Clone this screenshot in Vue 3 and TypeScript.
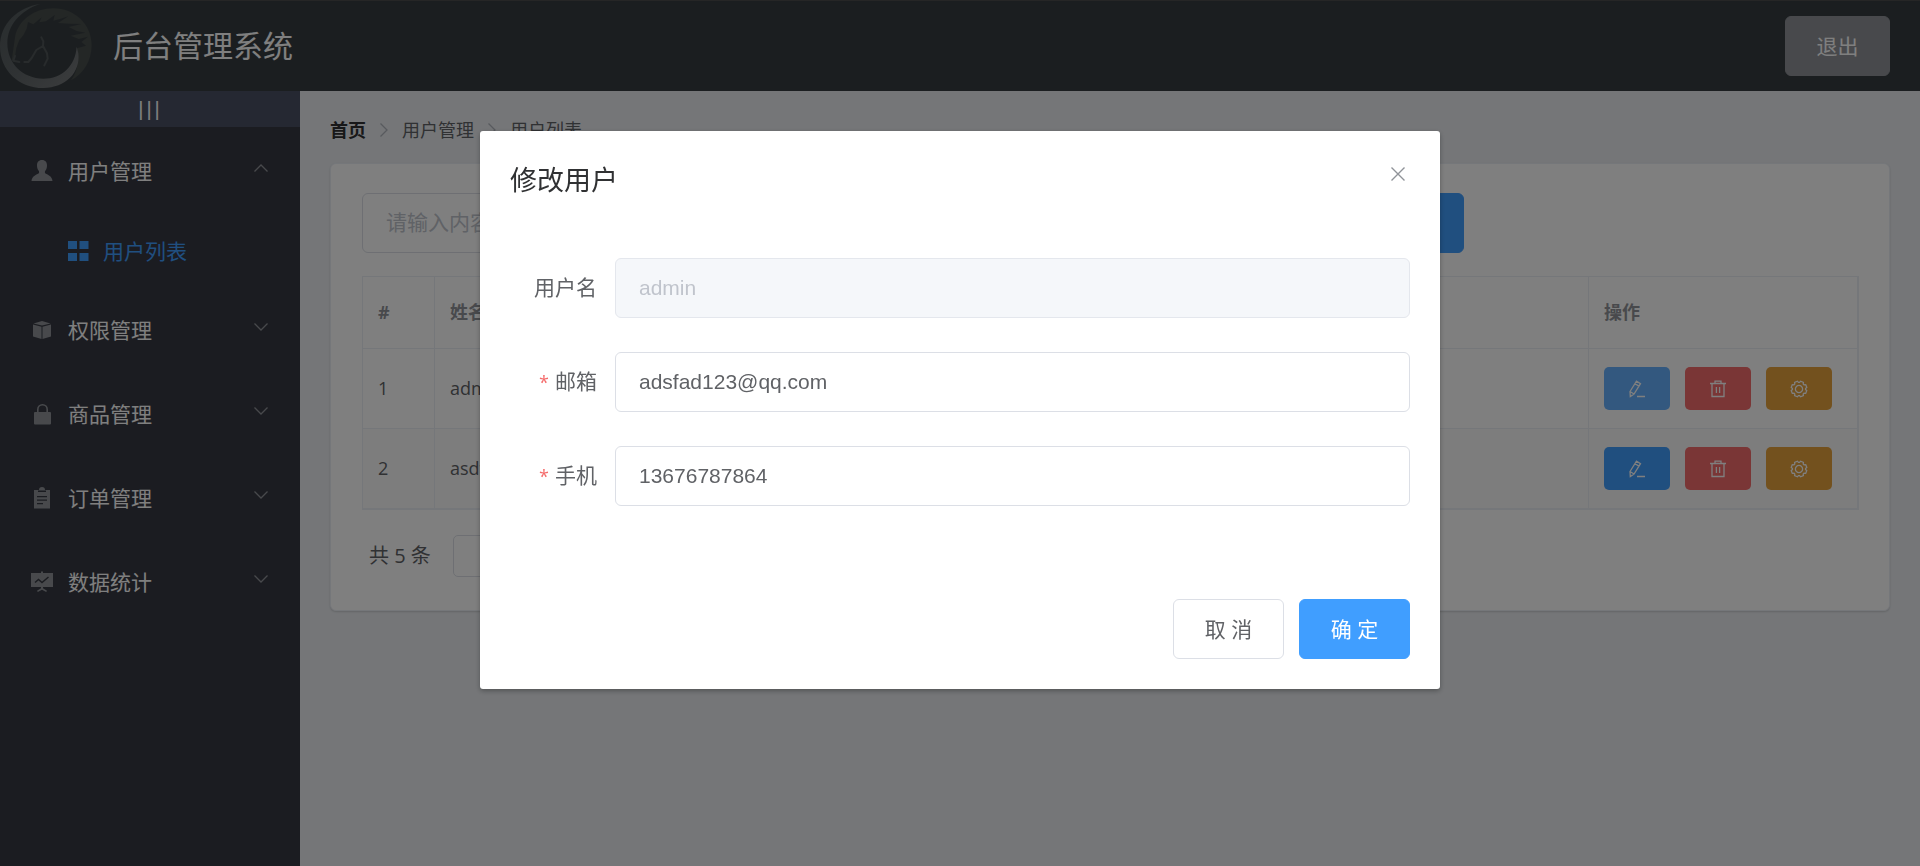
<script setup lang="ts">
import { ref } from 'vue'

interface MenuItem { id: number; label: string; icon: string; open?: boolean }
interface UserRow { id: number; name: string; hovered?: boolean }

const menu: MenuItem[] = [
  { id: 1, label: '用户管理', icon: 'user', open: true },
  { id: 2, label: '权限管理', icon: 'box' },
  { id: 3, label: '商品管理', icon: 'lock' },
  { id: 4, label: '订单管理', icon: 'order' },
  { id: 5, label: '数据统计', icon: 'chart' },
]
const users: UserRow[] = [
  { id: 1, name: 'admin', hovered: true },
  { id: 2, name: 'asdf' },
]
const form = ref({ username: 'admin', email: 'adsfad123@qq.com', mobile: '13676787864' })
const query = ref('')
</script>

<template>
  <div class="page">
    <header class="header">
      <div class="brand">
        <svg class="logo" viewBox="0 3 276 270" aria-hidden="true">
          <defs>
            <linearGradient id="swoosh" x1="0" y1="0" x2="1" y2="1">
              <stop offset="0" stop-color="#525a5c" />
              <stop offset=".5" stop-color="#5e6467" />
              <stop offset="1" stop-color="#787b7d" />
            </linearGradient>
          </defs>
          <path fill="#484e4c" d="M45 112C54 60 104 25 160 25c64 0 115 48 115 110 0 48-26 88-62 106 22-30 24-62 17-96l28-8-14-11 20-16-28 7-24-10 44-9-26-5-24-12 38-9-36-1-34-2 31-20-28 9-17 4 4-17-26 19-20 3 7-15-25 21-16-7-4 20-10 20-12 14-9 24-4 28-6 9 11 5-15-4Z" />
          <path fill="url(#swoosh)" d="M120 12C54 22 0 70 0 140c0 70 56 124 130 124 66 0 112-46 105-104l-5-20c-4 58-44 96-100 96-62 0-108-46-108-106C22 76 60 32 120 12Z" />
          <path fill="none" stroke="#505658" stroke-width="6" stroke-linecap="round" stroke-linejoin="round" d="M124 112l6 12-1 14-20 12-14 24-10 12h-12M129 138l12 22 2 16-10 20M45 168l-5 14 18 4" />
        </svg>
        <span class="brand-name">后台管理系统</span>
      </div>
      <button type="button" class="btn btn-info">退出</button>
    </header>

    <div class="body">
      <aside class="sidebar">
        <button type="button" class="toggle" aria-label="折叠菜单"><span>|</span><span>|</span><span>|</span></button>
        <nav class="menu">
          <template v-for="m in menu" :key="m.id">
            <a href="#" class="menu-item">
              <svg class="menu-icon" viewBox="0 0 22 22" aria-hidden="true">
                <path v-if="m.icon === 'user'" d="M11 0c3.400 0 5 2.300 5 5.500 0 2-.6 4-1.700 5.200-.5.6-.6 2.300.2 2.800 2.500 1.500 6.500 2.500 7 7.500H.5c.5-5 4.500-6 7-7.500.8-.5.7-2.200.2-2.800C6.600 9.500 6 7.500 6 5.500 6 2.300 7.600 0 11 0Z" />
                <g v-else-if="m.icon === 'box'">
                  <path d="M11 2l8.500 2.400L11 6.600 2.500 4.400Z" /><path d="M2 5.500l8.500 2.200V20L2 17.600Z" /><path d="M20 5.500l-8.500 2.200V20l8.500-2.400Z" />
                </g>
                <path v-else-if="m.icon === 'lock'" fill-rule="evenodd" d="M6 9V6.500a5.500 5.500 0 0 1 11 0V9h2a1 1 0 0 1 1 1v10.500a1 1 0 0 1-1 1H4a1 1 0 0 1-1-1V10a1 1 0 0 1 1-1ZM7.600 9h7.800V6.500a3.900 3.900 0 0 0-7.800 0Z" />
                <path v-else-if="m.icon === 'order'" fill-rule="evenodd" d="M3 3h5a3 3 0 0 1 6 0h5v18.500H3ZM7 5h8V3.600H7ZM6 9v1.200h10V9Zm0 3.500v1.200h10v-1.200ZM6 16v1.200h6V16Z" />
                <g v-else>
                  <path d="M0 2h10V.5h2V2h10v14H0Z" />
                  <path class="cutout" d="M4 11.500 7.500 8.500 11 11.500 17.500 6" />
                  <path d="M10 16h2v1.200l4 2.500-.8 1.300-4.200-2.200L6.800 21 6 19.700l4-2.500Z" />
                </g>
              </svg>
              <span>{{ m.label }}</span>
              <svg class="menu-arrow" viewBox="0 0 14 8" aria-hidden="true">
                <path :d="m.open ? 'M.5 7.500 7 1l6.500 6.500' : 'M.5.5 7 7 13.500.5'" />
              </svg>
            </a>
            <a v-if="m.open" href="#" class="submenu-item">
              <svg class="menu-icon" viewBox="0 0 22 22" aria-hidden="true">
                <path d="M1 1h9v8H1ZM12.500 1h9v8h-9ZM1 13h9v8H1ZM12.500 13h9v8h-9Z" />
              </svg>
              <span>用户列表</span>
            </a>
          </template>
        </nav>
      </aside>

      <main class="main">
        <nav class="breadcrumb" aria-label="breadcrumb">
          <a href="#" class="home">首页</a>
          <svg viewBox="0 0 18 18" aria-hidden="true"><path d="M5.500 2.500 12 9l-6.500 6.500" /></svg>
          <span>用户管理</span>
          <svg viewBox="0 0 18 18" aria-hidden="true"><path d="M5.500 2.500 12 9l-6.500 6.500" /></svg>
          <span>用户列表</span>
        </nav>

        <section class="card">
          <div class="tools">
            <input v-model="query" class="input" type="text" placeholder="请输入内容" aria-label="请输入内容" />
            <button type="button" class="btn btn-primary" aria-label="添加用户"></button>
          </div>
          <table class="table">
            <colgroup><col class="col-index" /><col /><col class="col-actions" /></colgroup>
            <thead>
              <tr><th>#</th><th>姓名</th><th>操作</th></tr>
            </thead>
            <tbody>
              <tr v-for="u in users" :key="u.id">
                <td>{{ u.id }}</td>
                <td>{{ u.name }}</td>
                <td>
                  <div class="actions">
                    <button type="button" class="btn-mini edit" :class="{ hovered: u.hovered }" aria-label="编辑">
                      <svg viewBox="0 0 18 18" aria-hidden="true"><path d="M2 11.500 8.500 1.200l4 2.400L6 14l-3.700 2.500ZM7 3.700l4 2.400M2 11.500l4 2.500M9 16.500h8" /></svg>
                    </button>
                    <button type="button" class="btn-mini delete" aria-label="删除">
                      <svg viewBox="0 0 18 18" aria-hidden="true"><path d="M1 3.500h16M6 3V1.200h6V3M3 3.500v13h12v-13M7.400 7v6M10.600 7v6" /></svg>
                    </button>
                    <button type="button" class="btn-mini setting" aria-label="设置">
                      <svg viewBox="-9 -9 18 18" aria-hidden="true">
                        <path d="M7.800 1.600 6.700 4.400 5 4.200 4.200 5 4.400 6.700 1.600 7.800.6 6.600H-.6L-1.600 7.800-4.400 6.700-4.200 5-5 4.200-6.700 4.400-7.800 1.600-6.600.6V-.6L-7.800-1.600-6.700-4.400-5-4.200-4.200-5-4.400-6.700-1.600-7.800-.6-6.600H.6L1.600-7.800 4.400-6.700 4.200-5 5-4.200 6.700-4.400 7.800-1.600 6.600-.6V.6Z" />
                        <circle cx="0" cy="0" r="3.600" />
                      </svg>
                    </button>
                  </div>
                </td>
              </tr>
            </tbody>
          </table>
          <div class="pagination">
            <span>共 5 条</span>
            <select class="page-size" aria-label="每页条数"></select>
          </div>
        </section>
      </main>
    </div>

    <div class="overlay">
      <section class="dialog" role="dialog" aria-modal="true" aria-labelledby="dialog-title">
        <div class="dialog-header">
          <h2 id="dialog-title">修改用户</h2>
          <button type="button" class="close" aria-label="关闭">
            <svg viewBox="0 0 14 14" aria-hidden="true"><path d="M.5.5l13 13M13.500.5l-13 13" /></svg>
          </button>
        </div>
        <form class="form" @submit.prevent>
          <div class="field">
            <label for="username">用户名</label>
            <input id="username" v-model="form.username" class="input" type="text" disabled />
          </div>
          <div class="field required">
            <label for="email">邮箱</label>
            <input id="email" v-model="form.email" class="input" type="text" />
          </div>
          <div class="field required">
            <label for="mobile">手机</label>
            <input id="mobile" v-model="form.mobile" class="input" type="text" />
          </div>
        </form>
        <div class="dialog-footer">
          <button type="button" class="btn">取 消</button>
          <button type="button" class="btn btn-primary">确 定</button>
        </div>
      </section>
    </div>
  </div>
</template>

<style>
body { margin: 0; }
</style>

<style scoped>
.page {
  display: flex;
  flex-direction: column;
  min-height: 100vh;
  font-family: "Open Sans", "Noto Sans CJK SC", sans-serif;
  font-size: 21px;
  line-height: 30px;
  color: #606266;
}
.page *, .page { box-sizing: border-box; }
a { color: inherit; text-decoration: none; }
button, input, select { margin: 0; font: inherit; cursor: pointer; }

.header {
  display: flex;
  align-items: center;
  justify-content: space-between;
  height: 91px;
  padding-right: 30px;
  border-top: 1px solid #4c4c4c;
  background: #373d41;
}
.brand { display: flex; align-items: center; gap: 21px; }
.logo { display: block; width: 92px; height: 90px; }
.brand-name { font-size: 30px; line-height: 40px; color: #fff; }

.btn {
  min-width: 111px;
  height: 60px;
  padding: 0 30px;
  border: 1px solid #dcdfe6;
  border-radius: 6px;
  background: #fff;
  color: #606266;
  font-size: 21px;
  line-height: 28px;
  white-space: nowrap;
}
.btn-primary { border-color: #409eff; background: #409eff; color: #fff; }
.btn-info { min-width: 105px; border-color: #909399; background: #909399; color: #fff; }

.body { display: flex; flex: 1; }
.sidebar { width: 300px; flex: none; background: #373942; }
.toggle {
  display: flex;
  align-items: center;
  justify-content: center;
  gap: 3px;
  width: 100%;
  height: 36px;
  padding: 0 2px 0 0;
  border: 0;
  background: #4a5064;
  color: #fff;
  font-family: "Liberation Sans", sans-serif;
  font-size: 20px;
  line-height: 36px;
}
.menu { padding-top: 2px; color: #fff; }
.menu-item, .submenu-item { display: flex; align-items: center; padding: 0 32px 0 31px; }
.menu-item { height: 84px; }
.submenu-item { height: 75px; padding-left: 67px; color: #409eff; }
.menu-icon { width: 22px; height: 22px; margin-right: 15px; fill: #909399; }
.submenu-item .menu-icon { margin-right: 14px; fill: #409eff; }
.cutout { fill: none; stroke: #373942; stroke-width: 1.500; }
.menu-arrow {
  width: 14px;
  height: 8px;
  margin: 0 0 7px auto;
  fill: none;
  stroke: #909399;
  stroke-width: 1.300;
}

.main { flex: 1; min-width: 0; padding: 30px; background: #eaedf1; }
.breadcrumb {
  display: flex;
  align-items: center;
  gap: 9px;
  height: 18px;
  margin-bottom: 24px;
  font-size: 18px;
  line-height: 18px;
}
.breadcrumb svg { width: 18px; height: 18px; fill: none; stroke: #b0b4bc; stroke-width: 1.300; }
.home { font-weight: 700; color: #303133; }

.card {
  padding: 29px 30px 30px 31px;
  border: 1px solid #ebeef5;
  border-radius: 6px;
  background: #fff;
  box-shadow: 0 1px 2px rgba(0, 0, 0, 0.15);
}
.tools { display: flex; gap: 30px; width: 73.6%; margin-bottom: 23px; }
.tools .btn { width: 144px; flex: none; }
.input {
  flex: 1;
  min-width: 0;
  height: 60px;
  padding: 0 23px;
  border: 1px solid #dcdfe6;
  border-radius: 6px;
  background: #fff;
  color: #606266;
  font-family: "Liberation Sans", "Noto Sans CJK SC", sans-serif;
  font-size: 21px;
  cursor: text;
}
.input::placeholder { color: #c0c4cc; opacity: 1; }
.input:disabled { border-color: #e4e7ed; background: #f5f7fa; color: #c0c4cc; cursor: not-allowed; }

.table {
  width: 100%;
  table-layout: fixed;
  border: 1px solid #ebeef5;
  border-collapse: separate;
  border-spacing: 0;
  font-size: 18px;
  line-height: 27px;
}
.col-index { width: 72px; }
.col-actions { width: 269px; }
th, td {
  height: 80px;
  padding: 0 15px;
  border-right: 1px solid #ebeef5;
  border-bottom: 1px solid #ebeef5;
  text-align: left;
}
th { height: 72px; color: #909399; font-weight: 700; }
tbody tr:nth-child(2) td { background: #fafafa; }
.actions { display: flex; gap: 15px; }
.btn-mini {
  display: flex;
  align-items: center;
  justify-content: center;
  width: 66px;
  height: 43px;
  padding: 0;
  border: 0;
  border-radius: 5px;
}
.btn-mini svg { width: 18px; height: 18px; fill: none; stroke: #fff; stroke-width: 1.300; }
.edit { background: #409eff; }
.edit.hovered { background: #66b1ff; }
.delete { background: #f56c6c; }
.setting { background: #e6a23c; }

.pagination {
  display: flex;
  align-items: center;
  gap: 22px;
  margin-top: 22px;
  padding: 3px 7px;
  font-size: 20px;
  line-height: 42px;
}
.page-size {
  width: 150px;
  height: 42px;
  border: 1px solid #dcdfe6;
  border-radius: 5px;
  background: #fff;
  appearance: none;
}

.overlay { position: fixed; inset: 0; padding-top: 131px; background: rgba(0, 0, 0, 0.5); }
.dialog {
  width: 50%;
  margin: 0 auto;
  border-radius: 3px;
  background: #fff;
  box-shadow: 0 2px 5px rgba(0, 0, 0, 0.3);
}
.dialog-header {
  display: flex;
  align-items: flex-start;
  justify-content: space-between;
  padding: 30px 30px 15px;
}
h2 { margin: 0; color: #303133; font-size: 27px; font-weight: 400; line-height: 37px; }
.close { padding: 6px 5px; border: 0; background: none; }
.close svg { display: block; width: 14px; height: 14px; fill: none; stroke: #909399; stroke-width: 1.400; }
.form { display: flex; flex-direction: column; gap: 34px; padding: 45px 30px 78px; }
.field { display: flex; }
label { width: 105px; flex: none; padding-right: 18px; line-height: 58px; text-align: right; }
.required label::before { content: "*"; margin-right: 6px; color: #f56c6c; font-size: 18px; }
.dialog-footer { display: flex; justify-content: flex-end; gap: 15px; padding: 15px 30px 30px; }
</style>
